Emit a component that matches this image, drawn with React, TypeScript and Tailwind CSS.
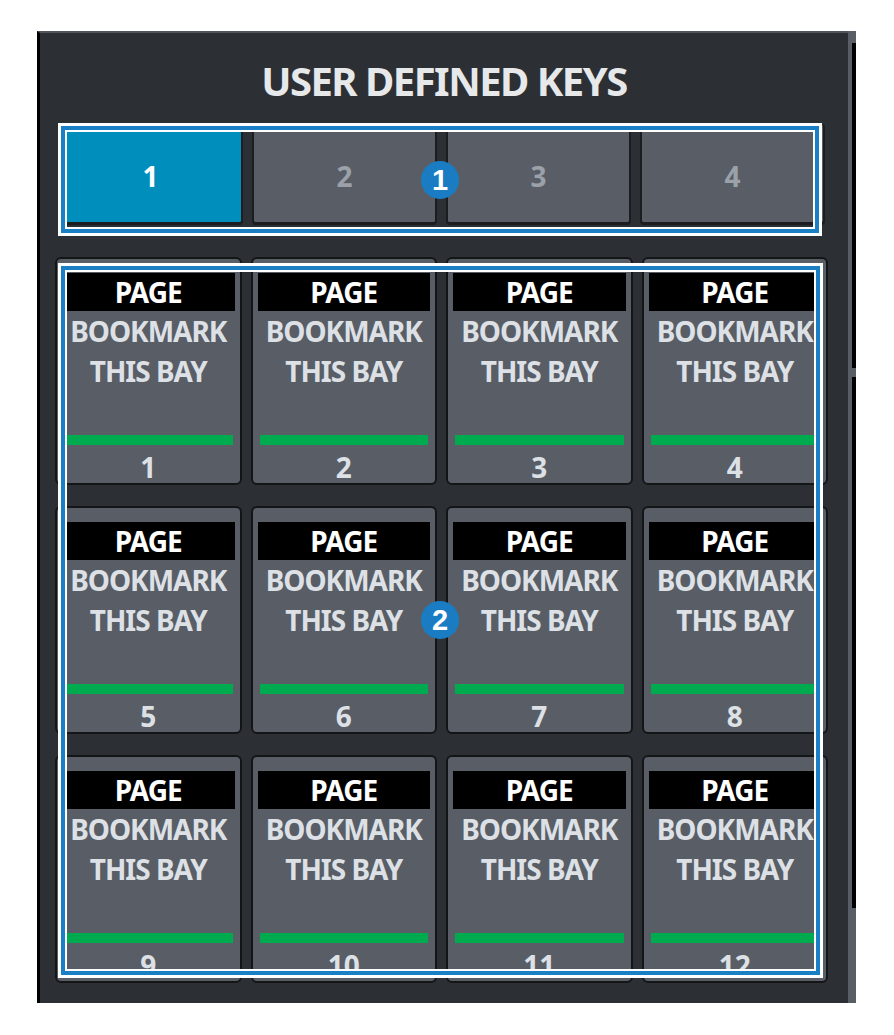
import React from "react"

const font = { fontFamily: '"Noto Sans", "Open Sans", sans-serif' }

function Frame({ className }: { className: string }) {
  // annotation outline: white / blue / white
  return (
    <div className={`pointer-events-none absolute border-[3px] border-white ${className}`}>
      <div className="h-full w-full border-4 border-[#1b7fc6]">
        <div className="h-full w-full border-2 border-white" />
      </div>
    </div>
  )
}

function Badge({ n, className }: { n: number; className: string }) {
  return (
    <div
      className={`absolute flex h-[38px] w-[38px] items-center justify-center rounded-full bg-[#1a7dc4] text-[29px] font-bold leading-none text-white ${className}`}
      style={{ fontFamily: '"Liberation Sans", Arial, sans-serif' }}
    >
      {n}
    </div>
  )
}

function Tile({ n }: { n: number }) {
  return (
    <div className="flex h-[228px] flex-col rounded-[6px] border-2 border-[#141517] bg-[#585d66]">
      <div className="mx-[5px] mt-[14px] flex h-[38px] items-center justify-center bg-black text-[28px] font-bold leading-[28px] tracking-[-1px] text-white">
        PAGE
      </div>
      <div className="text-center text-[28px] font-bold leading-[40px] tracking-[-1px] text-[#dde1e6]">
        <p>BOOKMARK</p>
        <p>THIS BAY</p>
      </div>
      <div className="mx-[7px] mt-[44px] h-[10px] bg-[#00ab4f]" />
      <p className="mt-[8px] text-center text-[28px] font-bold leading-[28px] text-[#dde1e6]">
        {n}
      </p>
    </div>
  )
}

export default function App() {
  const tabs = [1, 2, 3, 4]
  const keys = Array.from({ length: 12 }, (_, i) => i + 1)

  return (
    <div className="h-[1035px] w-[894px] bg-white pl-[37px] pt-[31px]" style={font}>
      <div className="flex h-[972px] w-[819px]">

        {/* PANEL */}
        <div className="relative flex-1 overflow-hidden border-l-[3px] border-t-2 border-l-black border-t-[#50555c] bg-[#2c2f33]">

          {/* TITLE */}
          <h1 className="pt-[28px] text-center text-[40px] font-bold leading-[40px] tracking-[-1.5px] text-[#e6e8ea]">
            USER DEFINED KEYS
          </h1>

          {/* BANK TABS */}
          <div className="relative ml-[18px] mt-[23px] w-[767px]">
            <div className="grid h-[101px] grid-cols-4 gap-[9px]">
              {tabs.map((t) => (
                <div
                  key={t}
                  className={`flex items-center justify-center rounded-[4px] border-x-2 border-b-[3px] border-[#1b1d20] pt-[6px] text-[28px] font-bold leading-[28px] ${
                    t === 1 ? "bg-[#008ebd] text-white" : "bg-[#585d66] text-[#9ba1a9]"
                  }`}
                >
                  {t}
                </div>
              ))}
            </div>
            <Frame className="-top-px -bottom-[11px] left-0 right-[3px]" />
          </div>

          {/* KEYS */}
          <div className="relative ml-[15px] mt-[32px] w-[773px]">
            <div className="grid grid-cols-4 gap-x-[9px] gap-y-[21px]">
              {keys.map((k) => (
                <Tile key={k} n={k} />
              ))}
            </div>
            <Frame className="bottom-[5px] left-[3px] right-[5px] top-[6px]" />
          </div>

          <Badge n={1} className="left-[381px] top-[128px]" />
          <Badge n={2} className="left-[381px] top-[568px]" />
        </div>

        {/* SCROLL STRIP */}
        <div className="flex w-[8px] flex-col items-end bg-[#585d66] pt-[12px]">
          <div className="h-[325px] w-[4px] bg-black" />
          <div className="mt-[9px] h-[531px] w-[4px] bg-black" />
        </div>

      </div>
    </div>
  )
}
